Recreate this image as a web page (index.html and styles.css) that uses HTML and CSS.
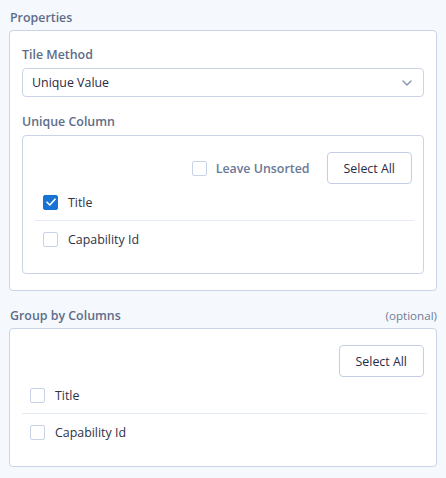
FILE: index.html
```html
<!DOCTYPE html>
<html>
<head>
<meta charset="utf-8">
<link rel="stylesheet" href="styles.css">
</head>
<body>
<div class="page">
  <div class="section-head"><span class="section-title">Properties</span></div>
  <div class="card">
    <div class="field-label">Tile Method</div>
    <div class="select">
      <span class="select-value">Unique Value</span>
      <svg class="chevron" width="10" height="6" viewBox="0 0 10 6"><path d="M1 1 L5 5 L9 1" fill="none" stroke="#8291b0" stroke-width="1.4" stroke-linecap="round" stroke-linejoin="round"/></svg>
    </div>
    <div class="field-label second">Unique Column</div>
    <div class="listbox">
      <div class="list-toolbar">
        <label class="toggle"><span class="cb"></span><span class="toggle-text">Leave Unsorted</span></label>
        <button class="btn">Select All</button>
      </div>
      <div class="row"><span class="cb checked"><svg width="10" height="8" viewBox="0 0 10 8"><path d="M1 4.2 L3.8 7 L9 1.2" fill="none" stroke="#fff" stroke-width="1.6" stroke-linecap="round" stroke-linejoin="round"/></svg></span><span class="row-text">Title</span></div>
      <div class="row"><span class="cb"></span><span class="row-text">Capability Id</span></div>
    </div>
  </div>

  <div class="section-head second"><span class="section-title">Group by Columns</span><span class="optional">(optional)</span></div>
  <div class="listbox outer">
    <div class="list-toolbar">
      <button class="btn">Select All</button>
    </div>
    <div class="row"><span class="cb"></span><span class="row-text">Title</span></div>
    <div class="row"><span class="cb"></span><span class="row-text">Capability Id</span></div>
  </div>
</div>
</body>
</html>
```
FILE: styles.css
```css
html, body {
  margin: 0;
  padding: 0;
  background: #f5f8fd;
}
body {
  font-family: "Open Sans", "Noto Sans", sans-serif;
  font-size: 12.4px;
  color: #2b3046;
}
.page {
  padding: 7px 9px 0 9px;
  width: 428px;
}
.section-head {
  display: flex;
  justify-content: space-between;
  align-items: center;
  height: 20px;
  margin-bottom: 3px;
  padding-left: 1px;
}
.section-head.second {
  margin-top: 14px;
}
.section-title {
  font-weight: 600;
  color: #5e6d89;
}
.optional {
  color: #6f7c94;
  font-size: 11.6px;
}
.card {
  background: #fff;
  border: 1px solid #cad4e7;
  border-radius: 4px;
  padding: 14px 12px 16px 12px;
}
.field-label {
  font-weight: 600;
  color: #5e6d89;
  line-height: 20px;
  margin-bottom: 3px;
}
.field-label.second {
  margin-top: 15px;
}
.select {
  display: flex;
  align-items: center;
  justify-content: space-between;
  height: 27px;
  border: 1px solid #cbd4e6;
  border-radius: 4px;
  padding: 0 11px 0 9px;
  background: #fff;
}
.select-value {
  color: #2b2a45;
}
.listbox {
  background: #fff;
  border: 1px solid #cad4e7;
  border-radius: 4px;
  padding: 16px 9px 16px 12px;
}
.list-toolbar {
  display: flex;
  justify-content: flex-end;
  align-items: center;
  height: 32px;
  padding-right: 2px;
}
.listbox.outer .list-toolbar {
  padding-right: 3px;
}
.toggle {
  display: flex;
  align-items: center;
  margin-right: 17px;
}
.toggle-text {
  margin-left: 9px;
  font-weight: 600;
  color: #6a7997;
}
.btn {
  height: 32px;
  padding: 0 16px;
  border: 1px solid #c4cfe3;
  border-radius: 4px;
  background: #fff;
  font-family: inherit;
  font-size: 12.4px;
  color: #2b2a45;
}
.row {
  display: flex;
  align-items: center;
  height: 36px;
  padding-left: 8px;
}
.row + .row {
  border-top: 1px solid #e6ecf5;
}
.row-text {
  margin-left: 10px;
  color: #2e3245;
}
.cb {
  width: 13px;
  height: 13px;
  border: 1px solid #c9d3e8;
  border-radius: 2px;
  background: #fff;
  display: inline-flex;
  align-items: center;
  justify-content: center;
}
.cb.checked {
  background: #1873d3;
  border-color: #1873d3;
}
```
